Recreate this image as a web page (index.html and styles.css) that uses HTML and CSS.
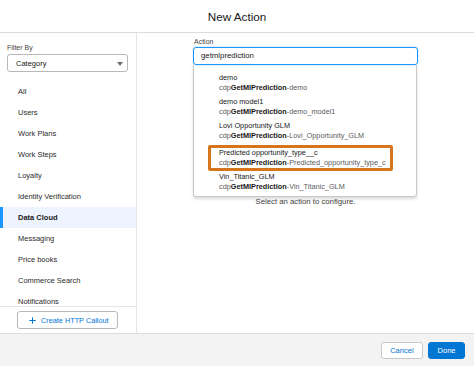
FILE: index.html
```html
<!DOCTYPE html>
<html lang="en">
<head>
<meta charset="utf-8">
<title>New Action</title>
<link rel="stylesheet" href="styles.css">
</head>
<body>
<div class="modal">
  <header class="modal-header">
    <h1 class="modal-title">New Action</h1>
  </header>
  <div class="modal-body">
    <aside class="sidebar">
      <div class="filter">
        <div class="filter-label">Filter By</div>
        <div class="select">
          <span>Category</span>
          <svg class="caret" width="6" height="4" viewBox="0 0 6 4"><path d="M0 0h6L3 4z" fill="#706e6b"/></svg>
        </div>
      </div>
      <ul class="nav">
        <li class="nav-item">All</li>
        <li class="nav-item">Users</li>
        <li class="nav-item">Work Plans</li>
        <li class="nav-item">Work Steps</li>
        <li class="nav-item">Loyalty</li>
        <li class="nav-item">Identity Verification</li>
        <li class="nav-item active">Data Cloud</li>
        <li class="nav-item">Messaging</li>
        <li class="nav-item">Price books</li>
        <li class="nav-item">Commerce Search</li>
        <li class="nav-item">Notifications</li>
      </ul>
      <div class="sidebar-foot">
        <button class="btn-outline">
          <svg width="7" height="7" viewBox="0 0 7 7"><path d="M3.5 0.3v6.4M0.3 3.5h6.4" stroke="#0176d3" stroke-width="1"/></svg>
          <span>Create HTTP Callout</span>
        </button>
      </div>
    </aside>
    <main class="content">
      <div class="combobox">
        <div class="field-label">Action</div>
        <div class="input">getmlprediction</div>
        <ul class="listbox">
          <li class="option">
            <div class="opt-title">demo</div>
            <div class="opt-meta">cdp<b>GetMlPrediction</b>-demo</div>
          </li>
          <li class="option">
            <div class="opt-title">demo model1</div>
            <div class="opt-meta">cdp<b>GetMlPrediction</b>-demo_model1</div>
          </li>
          <li class="option">
            <div class="opt-title">Lovi Opportunity GLM</div>
            <div class="opt-meta">cdp<b>GetMlPrediction</b>-Lovi_Opportunity_GLM</div>
          </li>
          <li class="option callout">
            <div class="opt-title">Predicted opportunity_type__c</div>
            <div class="opt-meta">cdp<b>GetMlPrediction</b>-Predicted_opportunity_type_c</div>
          </li>
          <li class="option last">
            <div class="opt-title">Vin_Titanic_GLM</div>
            <div class="opt-meta">cdp<b>GetMlPrediction</b>-Vin_Titanic_GLM</div>
          </li>
        </ul>
      </div>
      <p class="hint">Select an action to configure.</p>
    </main>
  </div>
  <footer class="modal-footer">
    <button class="btn btn-neutral">Cancel</button>
    <button class="btn btn-brand">Done</button>
  </footer>
</div>
</body>
</html>
```
FILE: styles.css
```css
* { box-sizing: border-box; }
html, body { margin: 0; padding: 0; }
body {
  width: 474px;
  height: 366px;
  background: #fff;
  font-family: "Liberation Sans", Arial, sans-serif;
  color: #181818;
  overflow: hidden;
}
ul { list-style: none; margin: 0; padding: 0; }
button { font-family: inherit; cursor: pointer; }

.modal { display: flex; flex-direction: column; height: 366px; }

.modal-header {
  height: 33px;
  border-bottom: 1px solid #dcdcdc;
  display: flex;
  align-items: center;
  justify-content: center;
  padding-top: 2px;
}
.modal-title {
  margin: 0;
  font-size: 11.7px;
  font-weight: normal;
  color: #181818;
  line-height: 14px;
}

.modal-body { display: flex; height: 300px; }

.sidebar {
  width: 137px;
  border-right: 1px solid #e5e5e5;
  display: flex;
  flex-direction: column;
}
.filter { padding: 10px 8px 0 7px; }
.filter-label {
  font-size: 7px;
  line-height: 10px;
  color: #444;
  margin-bottom: 1px;
}
.select {
  height: 18px;
  border: 1px solid #b8b8b8;
  border-radius: 3px;
  display: flex;
  align-items: center;
  justify-content: space-between;
  padding: 0 4px 0 8px;
  font-size: 7.5px;
  color: #181818;
}
.caret { margin-top: 1px; }

.nav {
  flex: 1;
  overflow: hidden;
  margin-top: 8.5px;
}
.nav-item {
  height: 21.1px;
  line-height: 21.1px;
  padding-left: 18px;
  font-size: 7.5px;
  color: #2b2b2b;
  white-space: nowrap;
}
.nav-item.active {
  background: #eef4ff;
  font-weight: bold;
  color: #181818;
  box-shadow: inset 3px 0 0 #1b96ff;
}

.sidebar-foot {
  height: 27px;
  border-top: 1px solid #e5e5e5;
  padding: 4px 0 0 17px;
}
.btn-outline {
  width: 101px;
  height: 18px;
  border: 1px solid #b8b8b8;
  border-radius: 3px;
  background: #fff;
  color: #0176d3;
  font-size: 7.3px;
  display: flex;
  align-items: center;
  padding: 0 0 0 11px;
  gap: 5px;
}

.content { flex: 1; padding-top: 3.5px; }
.combobox { width: 225px; margin: 0 auto; }
.field-label {
  font-size: 7px;
  line-height: 9px;
  color: #444;
  padding-left: 1px;
  margin-bottom: 1.5px;
}
.input {
  height: 18px;
  border: 1px solid #1b96ff;
  border-radius: 3px;
  box-shadow: 0 0 2px #9cc9f5;
  padding-left: 7px;
  font-size: 7.8px;
  line-height: 16px;
  color: #181818;
}
.listbox {
  width: 224px;
  border: 1px solid #c9c9c9;
  border-top: 0;
  border-radius: 0 0 3px 3px;
  box-shadow: 0 2px 3px rgba(0,0,0,0.15);
  padding: 6px 0 2px;
}
.option {
  padding: 2px 0 2px 25px;
  font-size: 7.3px;
  line-height: 10px;
  white-space: nowrap;
}
.opt-title { color: #181818; }
.opt-meta { color: #5c5c5c; }
.opt-meta b { color: #181818; }
.option.callout {
  margin: 2px 23px -1px 14px;
  padding: 0 0 0 8px;
  border: 3px solid #d6761c;
  border-radius: 2px;
}
.hint {
  margin: 0;
  text-align: center;
  font-size: 7.75px;
  line-height: 9px;
  color: #3e3e3c;
}

.modal-footer {
  height: 33px;
  border-top: 1px solid #dcdcdc;
  background: #f3f3f3;
  display: flex;
  align-items: center;
  justify-content: flex-end;
  gap: 5px;
  padding-right: 9px;
}
.btn {
  height: 17px;
  border-radius: 3px;
  font-size: 7.5px;
  padding: 0 8.5px;
}
.btn-neutral { background: #fff; border: 1px solid #c9c9c9; color: #0176d3; }
.btn-brand { background: #0176d3; border: 1px solid #0176d3; color: #fff; }
```
